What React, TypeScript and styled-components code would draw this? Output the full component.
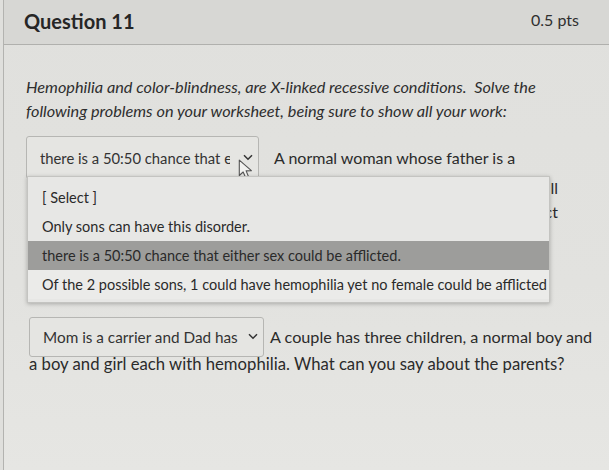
import React from "react";
import styled, { createGlobalStyle } from "styled-components";

const Global = createGlobalStyle`
  html, body { margin: 0; padding: 0; }
  body {
    background: #dfdfdc;
    font-family: Lato, "Open Sans", sans-serif;
    color: #2b2b2b;
    width: 609px;
    height: 470px;
    overflow: hidden;
  }
`;

const Card = styled.div`
  margin-left: 3px;
  height: 470px;
  border-left: 1px solid #b3b3b0;
  background: linear-gradient(180deg, #e0e0dd 0%, #e2e2df 60%, #e6e6e3 100%);
  display: flex;
  flex-direction: column;
`;

const Header = styled.div`
  height: 45px;
  background: #d7d7d4;
  border-bottom: 1px solid #b0b0ad;
  display: flex;
  align-items: center;
  justify-content: space-between;
  padding: 0 30px 0 20px;
  box-sizing: border-box;
`;

const Title = styled.h2`
  margin: 0 0 2px;
  font-size: 20px;
  font-weight: 700;
  color: #262626;
`;

const Points = styled.span`
  font-size: 16px;
  color: #2f2f2f;
  margin-bottom: 6px;
`;

const Body = styled.div`
  padding: 30px 51px 0 22px;
  display: flex;
  flex-direction: column;
`;

const Intro = styled.p`
  margin: 0;
  font-size: 16.3px;
  font-style: italic;
  line-height: 24px;
  color: #2e2e2e;
  white-space: nowrap;
`;

const Block = styled.div`
  position: relative;
  margin-top: 13px;
  font-size: 16px;
  line-height: 24px;
`;

const Line = styled.div<{ $gap: number }>`
  display: flex;
  align-items: center;
  gap: ${(p) => p.$gap}px;
  white-space: nowrap;
`;

const SelectBox = styled.div<{ $h: number; $w: number; $fs: number; $pr: number }>`
  position: relative;
  width: ${(p) => p.$w}px;
  height: ${(p) => p.$h}px;
  box-sizing: border-box;
  border: 1px solid #b6b6b3;
  border-radius: 3px;
  background: #e5e5e2;
  display: flex;
  align-items: center;
  padding: 0 ${(p) => p.$pr}px 0 13px;
  font-size: ${(p) => p.$fs}px;
  color: #333;
  flex-shrink: 0;
`;

const SelectText = styled.span`
  overflow: hidden;
  white-space: nowrap;
  text-overflow: clip;
`;

const Chevron = styled.svg`
  position: absolute;
  right: 5px;
  top: 50%;
  margin-top: -4px;
`;

const Cursor = styled.svg`
  position: absolute;
  left: 210px;
  top: 23px;
`;

const HiddenLines = styled.div`
  display: flex;
  flex-direction: column;
  align-items: flex-end;
  margin-top: -3px;
  white-space: nowrap;
  color: #2b2b2b;
`;

const Spacer = styled.div`
  height: 93px;
`;

const Menu = styled.div`
  position: absolute;
  left: 1px;
  top: 40px;
  background: #e7e7e5;
  box-shadow: 0 1px 4px rgba(0, 0, 0, 0.25);
  border: 1px solid #c4c4c1;
  padding: 6px 0 3px;
  display: flex;
  flex-direction: column;
  z-index: 5;
`;

const Option = styled.div<{ $active?: boolean; $light?: boolean }>`
  height: 29px;
  display: flex;
  align-items: center;
  padding: 0 2px 0 14px;
  font-size: 14.5px;
  white-space: nowrap;
  color: #2a2a2a;
  background: ${(p) => (p.$active ? "#9d9d9b" : p.$light ? "#ebebe9" : "transparent")};
`;

const Block2 = styled.div`
  margin-left: 3px;
  font-size: 16.2px;
  line-height: 24px;
`;

const LastLine = styled.div`
  margin-top: -5px;
  font-size: 16.7px;
  white-space: nowrap;
`;

const ChevronIcon = () => (
  <Chevron width="10" height="7" viewBox="0 0 10 7">
    <path d="M1 1.2 L5 5.2 L9 1.2" fill="none" stroke="#333" strokeWidth="1.5" />
  </Chevron>
);

export default function App() {
  return (
    <>
      <Global />
      <Card>
        <Header>
          <Title>Question 11</Title>
          <Points>0.5 pts</Points>
        </Header>
        <Body>
          <Intro>
            Hemophilia and color-blindness, are X-linked recessive conditions.{"\u00a0 "}Solve the
            <br />
            following problems on your worksheet, being sure to show all your work:
          </Intro>
          <Block>
            <Line $gap={15}>
              <SelectBox $h={43} $w={233} $fs={14.8} $pr={28}>
                <SelectText>there is a 50:50 chance that either sex could be afflicted.</SelectText>
                <ChevronIcon />
              </SelectBox>
              <span>A normal woman whose father is a</span>
            </Line>
            <HiddenLines>
              <span>hemophiliac marries a normal man. The sons will</span>
              <span>be afflicted? Which sex could this disorder affect</span>
            </HiddenLines>
            <Spacer />
            <Cursor width="22" height="22" viewBox="0 0 20 20">
              <path
                d="M3 1 L3 15 L6.5 11.8 L9 17.5 L11.5 16.4 L9.2 10.8 L14 10.6 Z"
                fill="#f2f2f0"
                stroke="#555"
                strokeWidth="1"
                strokeLinejoin="round"
              />
            </Cursor>
            <Menu>
              <Option>[ Select ]</Option>
              <Option>Only sons can have this disorder.</Option>
              <Option $active>there is a 50:50 chance that either sex could be afflicted.</Option>
              <Option $light>Of the 2 possible sons, 1 could have hemophilia yet no female could be afflicted</Option>
            </Menu>
          </Block>
          <Block2>
            <Line $gap={6}>
              <SelectBox $h={40} $w={235} $fs={15.3} $pr={24}>
                <SelectText>Mom is a carrier and Dad has hemophilia</SelectText>
                <ChevronIcon />
              </SelectBox>
              <span>A couple has three children, a normal boy and</span>
            </Line>
            <LastLine>a boy and girl each with hemophilia. What can you say about the parents?</LastLine>
          </Block2>
        </Body>
      </Card>
    </>
  );
}
